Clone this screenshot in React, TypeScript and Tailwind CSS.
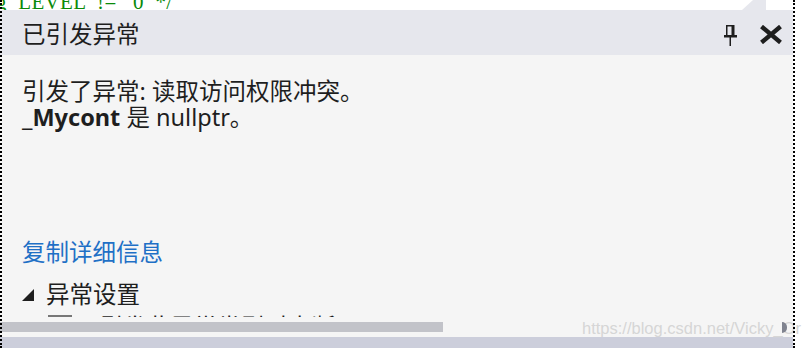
import React from "react";

// Exception helper popup, as shown over the code editor
function PinIcon() {
  return (
    <svg width="14" height="22" viewBox="0 0 14 22" className="block">
      <rect x="2.75" y="1.75" width="7" height="10" fill="none" stroke="#1e1e1e" strokeWidth="1.5" />
      <rect x="7.5" y="1" width="2.5" height="11" fill="#1e1e1e" />
      <rect x="0" y="11" width="13" height="2.5" fill="#1e1e1e" />
      <rect x="5.5" y="13" width="1.5" height="9" fill="#1e1e1e" />
    </svg>
  );
}

function CloseIcon() {
  return (
    <svg width="24" height="19" viewBox="0 0 24 19" className="block">
      <path d="M2.5 1.5 L21.5 17.5 M21.5 1.5 L2.5 17.5" stroke="#1e1e1e" strokeWidth="4.4" fill="none" />
    </svg>
  );
}

export default function App() {
  return (
    <div className="relative w-[802px] h-[348px] overflow-hidden bg-white font-['Noto_Sans','Noto_Sans_CJK_SC',sans-serif] text-[#1e1e1e]">
      {/* editor text peeking above the popup */}
      <div className="relative h-[10px] overflow-hidden">
        <div className="absolute left-[-4px] top-[-8px] whitespace-pre font-['Liberation_Serif',serif] text-[21px] leading-[21px] tracking-[0.3px] [word-spacing:6px] text-[#0a8a0a]">
          g LEVEL != <span className="ml-[5px]">0</span> */
        </div>
        <svg width="802" height="10" className="absolute left-0 top-0">
          <polygon points="742,10 753,0 766,0 766,10" fill="#e6e7ed" />
        </svg>
      </div>

      <div className="flex h-[338px]">
        <div className="w-[793px] flex flex-col">
          {/* header */}
          <div className="h-[45px] bg-[#e6e7ed] flex items-center pl-[22px] pr-[10px] pt-[3px]">
            <span className="text-[23.5px] leading-[26px]">已引发异常</span>
            <div className="ml-auto flex items-center gap-[21px]">
              <div className="mt-[2px]">
                <PinIcon />
              </div>
              <CloseIcon />
            </div>
          </div>

          {/* body */}
          <div className="flex-1 bg-[#f5f5f5] flex flex-col">
            <div className="h-[262px] overflow-hidden pl-[22px] pt-[23px]">
              <div className="text-[23.5px] leading-[26px]">
                <div>引发了异常: 读取访问权限冲突。</div>
                <div>
                  _<span className="font-bold">Mycont</span> 是 nullptr。
                </div>
              </div>
              <div className="mt-[109px] text-[23.5px] leading-[26px] text-[#1f70c6]">复制详细信息</div>
              <div className="mt-[16px] flex items-center text-[23.5px] leading-[26px]">
                <svg width="12" height="12" viewBox="0 0 12 12" className="mt-[2px]">
                  <polygon points="12,0 12,12 0,12" fill="#1e1e1e" />
                </svg>
                <span className="ml-[12px]">异常设置</span>
              </div>
              <div className="mt-[8px] ml-[26px] flex items-start">
                <div className="w-[24px] h-[24px] border-2 border-[#777777] bg-white" />
                <span className="ml-[28px] mt-[-1px] text-[23.5px] leading-[26px]">引发此异常类型时中断</span>
              </div>
            </div>
            <div className="mt-[5px] h-[10px]">
              <div className="w-[443px] h-full bg-[#c2c3c9]" />
            </div>
            <div className="flex-1" />
            <div className="h-[11px] bg-[#cccedb]" />
          </div>
        </div>
        <div className="flex-1 bg-white" />
      </div>

      {/* watermark */}
      <div className="absolute left-[582px] top-[318px] text-[16.5px] leading-[20px] font-['Liberation_Sans',sans-serif] text-[#d6d6d6]">
        https://blog.csdn.net/Vicky_Or
      </div>
      <div className="absolute left-[782px] top-[322px] w-[5px] h-[11px] rounded-r-full bg-[#80838f]" />

      {/* dotted selection borders */}
      <div className="absolute left-0 top-0 h-full border-l-2 border-dotted border-black" />
      <div className="absolute left-[793px] top-0 h-full border-l-2 border-dotted border-black" />
    </div>
  );
}
